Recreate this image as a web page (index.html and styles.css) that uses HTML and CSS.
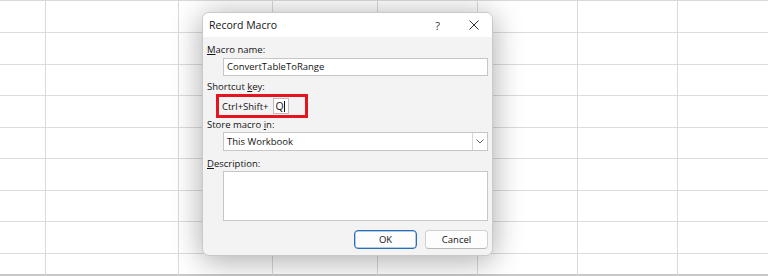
FILE: index.html
```html
<!DOCTYPE html>
<html>
<head>
<meta charset="utf-8">
<link rel="stylesheet" href="styles.css">
</head>
<body>
<div class="sheet">
  <div class="c"></div><div class="c"></div><div class="c"></div><div class="c"></div><div class="c"></div><div class="c"></div><div class="c"></div><div class="c last"></div>
  <div class="c"></div><div class="c"></div><div class="c"></div><div class="c"></div><div class="c"></div><div class="c"></div><div class="c"></div><div class="c last"></div>
  <div class="c"></div><div class="c"></div><div class="c"></div><div class="c"></div><div class="c"></div><div class="c"></div><div class="c"></div><div class="c last"></div>
  <div class="c"></div><div class="c"></div><div class="c"></div><div class="c"></div><div class="c"></div><div class="c"></div><div class="c"></div><div class="c last"></div>
  <div class="c"></div><div class="c"></div><div class="c"></div><div class="c"></div><div class="c"></div><div class="c"></div><div class="c"></div><div class="c last"></div>
  <div class="c"></div><div class="c"></div><div class="c"></div><div class="c"></div><div class="c"></div><div class="c"></div><div class="c"></div><div class="c last"></div>
  <div class="c"></div><div class="c"></div><div class="c"></div><div class="c"></div><div class="c"></div><div class="c"></div><div class="c"></div><div class="c last"></div>
  <div class="c"></div><div class="c"></div><div class="c"></div><div class="c"></div><div class="c"></div><div class="c"></div><div class="c"></div><div class="c last"></div>
  <div class="c bot"></div><div class="c bot"></div><div class="c bot"></div><div class="c bot"></div><div class="c bot"></div><div class="c bot"></div><div class="c bot"></div><div class="c bot last"></div>
</div>

<div class="dialog">
  <div class="titlebar">
    <span class="title">Record Macro</span>
    <span class="help">?</span>
    <svg class="close" width="10" height="10" viewBox="0 0 10 10"><path d="M0.5 0.5 L9.5 9.5 M9.5 0.5 L0.5 9.5" stroke="#333" stroke-width="1" fill="none"/></svg>
  </div>
  <div class="body">
    <div class="label lab1"><u>M</u>acro name:</div>
    <div class="field input">ConvertTableToRange</div>
    <div class="label lab2">Shortcut <u>k</u>ey:</div>
    <div class="shortcut">
      <span class="ctrl">Ctrl+Shift+</span>
      <span class="keybox">Q<span class="caret"></span></span>
    </div>
    <div class="label lab3">Store macro <u>i</u>n:</div>
    <div class="field select">
      <span class="seltext">This Workbook</span>
      <span class="dropbtn"><svg width="8" height="5" viewBox="0 0 8 5"><path d="M0.5 0.5 L4 4 L7.5 0.5" stroke="#666" stroke-width="1" fill="none"/></svg></span>
    </div>
    <div class="label lab4"><u>D</u>escription:</div>
    <div class="field textarea"></div>
    <div class="buttons">
      <div class="btn ok">OK</div>
      <div class="btn">Cancel</div>
    </div>
  </div>
</div>
</body>
</html>
```

FILE: styles.css
```css
html, body {
  margin: 0;
  padding: 0;
  background: #ffffff;
  width: 768px;
  height: 276px;
  overflow: hidden;
  font-family: "Open Sans", "Noto Sans", sans-serif;
}

.sheet {
  display: grid;
  grid-template-columns: 46px 133px 94px 105px 100px 100px 100px 1fr;
  grid-template-rows: 32px 32px 31px 32px 31px 32px 31px 32px 22px;
  border-top: 1px solid #d9d9d9;
  width: 768px;
}

.c {
  box-sizing: border-box;
  border-right: 1px solid #dadada;
  border-bottom: 1px solid #dcdcdc;
}
.c.last { border-right: none; }
.c.bot { border-bottom: 2px solid #c8c8c8; }

.dialog {
  position: absolute;
  left: 202px;
  top: 12px;
  width: 291px;
  height: 244px;
  box-sizing: border-box;
  border: 1px solid #c9c9c9;
  border-radius: 7px;
  background: #f3f3f3;
  box-shadow: 0 0 32px rgba(0, 0, 0, 0.22), 0 10px 28px rgba(0, 0, 0, 0.14);
  overflow: hidden;
  color: #141414;
  font-size: 9.5px;
}

.titlebar {
  height: 24px;
  background: #ffffff;
  display: flex;
  align-items: center;
  padding-left: 6px;
}
.title {
  font-size: 10.5px;
  flex: 1;
}
.help {
  font-size: 11px;
  margin-right: 29px;
  color: #333;
}
.close {
  margin-right: 13px;
}

.body {
  display: flex;
  flex-direction: column;
  align-items: flex-start;
  padding-left: 4px;
}

.label {
  height: 14px;
  line-height: 14px;
  font-size: 9.5px;
}
.label u { text-decoration-thickness: 1px; text-underline-offset: 1px; }
.lab1 { margin-top: 6px; }
.lab2 { margin-top: 4px; }
.lab3 { margin-top: 0; }
.lab4 { margin-top: 6px; }

.field {
  box-sizing: border-box;
  width: 265px;
  margin-left: 16px;
  background: #ffffff;
  border: 1px solid #c6c6c6;
}
.input {
  height: 18px;
  margin-top: 1px;
  line-height: 16px;
  padding-left: 3px;
  font-size: 9.5px;
}

.shortcut {
  box-sizing: border-box;
  margin-left: 9px;
  width: 92px;
  height: 24px;
  border: 3px solid #e5141e;
  display: flex;
  align-items: center;
  padding-left: 3px;
  gap: 4px;
}
.ctrl {
  font-size: 9.5px;
}
.keybox {
  box-sizing: border-box;
  width: 16px;
  height: 16px;
  background: #fff;
  border: 1px solid #bdbdbd;
  font-size: 10.5px;
  line-height: 14px;
  padding-left: 2px;
  display: flex;
  align-items: center;
}
.caret {
  display: inline-block;
  width: 1px;
  height: 11px;
  background: #111;
}

.select {
  height: 19px;
  display: flex;
  align-items: stretch;
}
.seltext {
  flex: 1;
  line-height: 17px;
  padding-left: 3px;
  font-size: 9.5px;
}
.dropbtn {
  width: 14px;
  border-left: 1px solid #d6d6d6;
  display: flex;
  align-items: center;
  justify-content: center;
}

.textarea {
  height: 50px;
}

.buttons {
  margin-top: 9px;
  display: flex;
  gap: 8px;
  align-self: flex-end;
  margin-right: 4px;
}
.btn {
  box-sizing: border-box;
  width: 63px;
  height: 19px;
  background: #fdfdfd;
  border: 1px solid #d0d0d0;
  border-bottom-color: #b8b8b8;
  border-radius: 4px;
  display: flex;
  align-items: center;
  justify-content: center;
  font-size: 9.5px;
}
.btn.ok {
  border: 1px solid #2a6fb6;
  box-shadow: inset 0 0 0 0.5px #6a9bd0;
}
```
